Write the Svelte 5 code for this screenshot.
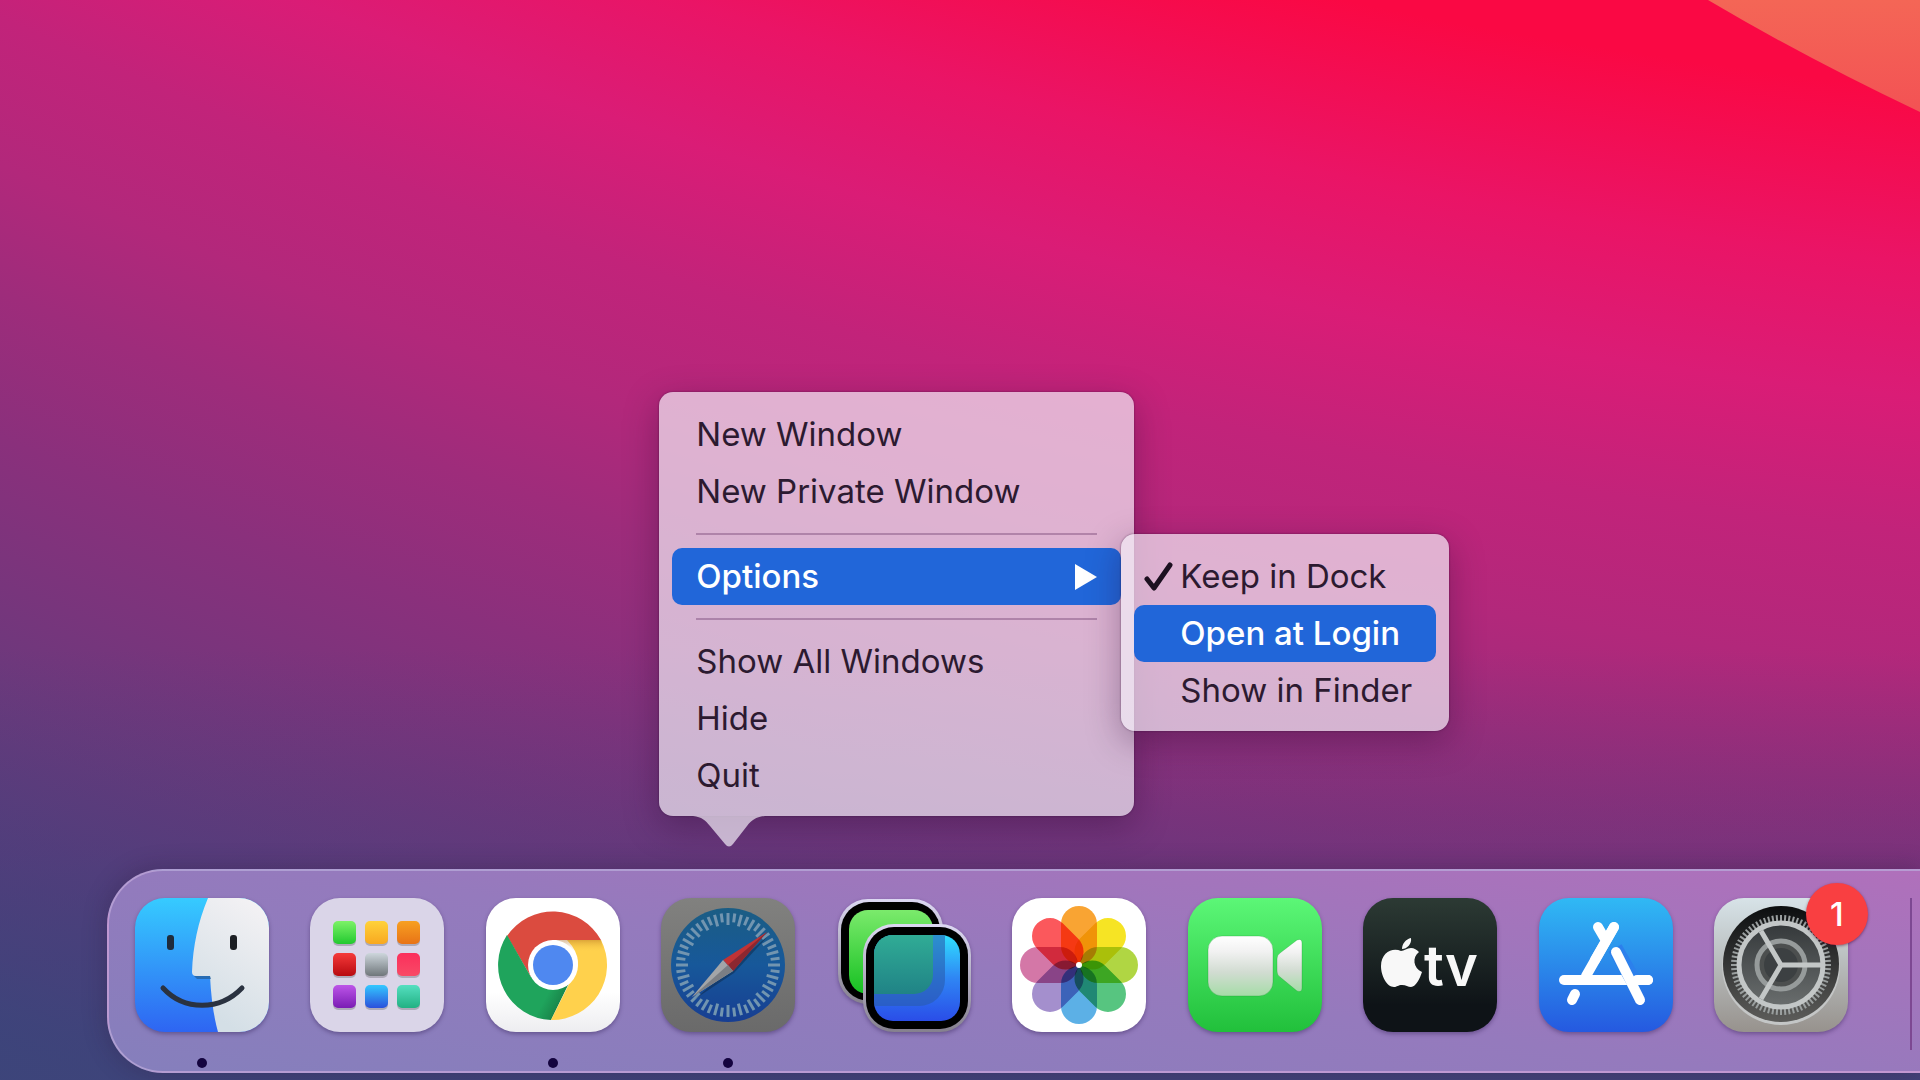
<script lang="ts">
  type Entry = { label?: string; active?: boolean; checked?: boolean; submenu?: Entry[] };

  const options: Entry[] = [
    { label: 'Keep in Dock', checked: true },
    { label: 'Open at Login', active: true },
    { label: 'Show in Finder' }
  ];

  const menu: Entry[] = [
    { label: 'New Window' },
    { label: 'New Private Window' },
    {},
    { label: 'Options', active: true, submenu: options },
    {},
    { label: 'Show All Windows' },
    { label: 'Hide' },
    { label: 'Quit' }
  ];

  const apps = [
    { id: 'finder', name: 'Finder', running: true },
    { id: 'launchpad', name: 'Launchpad' },
    { id: 'chrome', name: 'Google Chrome', running: true },
    { id: 'safari', name: 'Safari', running: true, menu },
    { id: 'windows', name: 'Window Switcher' },
    { id: 'photos', name: 'Photos' },
    { id: 'facetime', name: 'FaceTime' },
    { id: 'tv', name: 'TV' },
    { id: 'appstore', name: 'App Store' },
    { id: 'settings', name: 'System Preferences', badge: 1 }
  ];

  const pads = [
    ['#7df267', '#22c930'], ['#ffd23a', '#f8a820'], ['#f7a022', '#e87316'],
    ['#f53a3a', '#b80a10'], ['#cdd6dc', '#70777b'], ['#fb2f5c', '#f84a66'],
    ['#bd55e8', '#7a1cb4'], ['#33c8ff', '#2b50dc'], ['#55dfc0', '#22b183']
  ];

  const petals = ['#f99a1c', '#f5e10c', '#a8d22e', '#45bf72', '#4aa8e4', '#9a83c8', '#d0689e', '#fb464a'];

  const ticks = Array.from({ length: 48 }, (_, i) => i * 7.5);
  const teeth = Array.from({ length: 72 }, (_, i) => i * 5);
</script>

<svelte:head>
  <title>Desktop</title>
</svelte:head>

{#snippet icon(id: string)}
  <svg class="icon" viewBox="0 0 134 134" aria-hidden="true">
    {#if id === 'finder'}
      <defs>
        <linearGradient id="finder-blue" x2="0" y2="1">
          <stop stop-color="#36cbff" />
          <stop offset="1" stop-color="#2e65f2" />
        </linearGradient>
        <linearGradient id="finder-white" x1="1" x2="0.6" y2="1">
          <stop stop-color="#f6f3f5" />
          <stop offset="1" stop-color="#d4dfe6" />
        </linearGradient>
        <clipPath id="finder-clip"><rect width="134" height="134" rx="30" /></clipPath>
      </defs>
      <g clip-path="url(#finder-clip)">
        <rect width="134" height="134" fill="url(#finder-blue)" />
        <path d="M73 0C63 24 58 48 57 74q0 4 4 4h14c1 19 3 38 8 56h51V0z" fill="url(#finder-white)" />
        <path d="M59 78h16l1 3H62z" fill="#245d96" opacity=".7" />
      </g>
      <rect x="32" y="37" width="7" height="15" rx="3" fill="#1f2c3c" />
      <rect x="95" y="37" width="7" height="15" rx="3" fill="#1c1f24" />
      <path d="M28 90c21 23 57 23 79 0" fill="none" stroke="#2a3240" stroke-width="5" stroke-linecap="round" />
    {:else if id === 'launchpad'}
      <rect width="134" height="134" rx="30" fill="#dad5e8" />
      {#each pads as [from, to], i}
        <linearGradient id="pad-{i}" x2="0" y2="1">
          <stop stop-color={from} />
          <stop offset="1" stop-color={to} />
        </linearGradient>
        <rect x={23 + (i % 3) * 32} y={25 + Math.floor(i / 3) * 32} width="23" height="23" rx="5" fill="#0003" />
        <rect x={23 + (i % 3) * 32} y={23 + Math.floor(i / 3) * 32} width="23" height="23" rx="5" fill="url(#pad-{i})" />
      {/each}
    {:else if id === 'chrome'}
      <defs>
        <linearGradient id="chrome-tile" x2="0" y2="1">
          <stop offset=".7" stop-color="#fff" />
          <stop offset="1" stop-color="#ededf0" />
        </linearGradient>
        <linearGradient id="chrome-shade" x2="0" y2="1">
          <stop stop-color="#a8641c" stop-opacity=".4" />
          <stop offset="1" stop-color="#ffd24d" stop-opacity="0" />
        </linearGradient>
        <linearGradient id="chrome-green" x1="0.2" y1=".2" x2="1" y2=".7">
          <stop offset=".7" stop-color="#1fa45c" />
          <stop offset="1" stop-color="#177a44" />
        </linearGradient>
      </defs>
      <rect width="134" height="134" rx="30" fill="url(#chrome-tile)" />
      <path d="M21 38A55 55 0 0 1 115 42H67L45 79z" fill="#db4b3f" />
      <path d="M21 37A55 55 0 0 0 65 122L86 79 45 79z" fill="url(#chrome-green)" />
      <path d="M115 42A55 55 0 0 1 65 122L86 80Q100 62 81 42z" fill="#ffd14c" />
      <path d="M70 42h45l3 12H86z" fill="url(#chrome-shade)" />
      <circle cx="67" cy="67" r="25" fill="#fff" />
      <circle cx="67" cy="67" r="20" fill="#4f88f0" />
    {:else if id === 'safari'}
      <defs>
        <linearGradient id="safari-tile" x2="0" y2="1">
          <stop stop-color="#81817f" />
          <stop offset="1" stop-color="#6a6a6a" />
        </linearGradient>
        <linearGradient id="safari-dial" x2="0" y2="1">
          <stop stop-color="#1b5d84" />
          <stop offset=".5" stop-color="#17589a" />
          <stop offset="1" stop-color="#173e92" />
        </linearGradient>
      </defs>
      <rect width="134" height="134" rx="30" fill="url(#safari-tile)" />
      <circle cx="67" cy="67" r="57" fill="url(#safari-dial)" />
      {#each ticks as angle, i}
        <path d="M67 15v{i % 2 ? 9 : 12}" stroke="#7295b0" stroke-width="3" transform="rotate({angle} 67 67)" />
      {/each}
      <path d="M108 37L73 75 34 101z" fill="#0b2848" opacity=".5" />
      <path d="M106 34L62 62l10 11z" fill="#c03335" />
      <path d="M106 34L67 67l5 6z" fill="#8c2730" />
      <path d="M31 99L62 62l10 11z" fill="#a3a5a8" />
      <path d="M31 99L67 67l5 6z" fill="#7b7e84" />
    {:else if id === 'windows'}
      <defs>
        <linearGradient id="win-green" x2="0" y2="1">
          <stop stop-color="#7bea6c" />
          <stop offset="1" stop-color="#16c022" />
        </linearGradient>
        <linearGradient id="win-blue" x2="0" y2="1">
          <stop stop-color="#30e0ff" />
          <stop offset=".5" stop-color="#2f86f4" />
          <stop offset="1" stop-color="#2a4de8" />
        </linearGradient>
        <linearGradient id="win-teal" x2="0" y2="1">
          <stop stop-color="#37bd9c" />
          <stop offset="1" stop-color="#208386" />
        </linearGradient>
        <linearGradient id="win-rim" x2="0" y2="1">
          <stop stop-color="#dcd8f2" />
          <stop offset="1" stop-color="#85808e" />
        </linearGradient>
        <clipPath id="win-clip"><rect x="37" y="37" width="86" height="86" rx="19" /></clipPath>
      </defs>
      <rect x="1" y="1" width="105" height="105" rx="30" fill="url(#win-rim)" />
      <rect x="4" y="4" width="99" height="99" rx="28" />
      <rect x="12" y="12" width="84" height="84" rx="19" fill="url(#win-green)" />
      <rect x="26" y="26" width="108" height="108" rx="31" fill="url(#win-rim)" />
      <rect x="29" y="29" width="102" height="102" rx="28" />
      <g clip-path="url(#win-clip)">
        <rect x="37" y="37" width="86" height="86" fill="url(#win-blue)" />
        <rect x="0" y="0" width="108" height="108" rx="26" fill="#2a5cae" opacity=".6" />
        <rect x="0" y="12" width="96" height="84" rx="19" fill="url(#win-teal)" />
      </g>
    {:else if id === 'photos'}
      <rect width="134" height="134" rx="30" fill="#fff" />
      <g class="petals">
        {#each petals as color, i}
          <rect x="49" y="8" width="36" height="58" rx="18" fill={color} transform="rotate({i * 45} 67 67)" />
        {/each}
      </g>
      <circle cx="67" cy="67" r="3" fill="#fff" />
    {:else if id === 'facetime'}
      <defs>
        <linearGradient id="ft-tile" x2="0" y2="1">
          <stop stop-color="#5cf777" />
          <stop offset="1" stop-color="#21c03b" />
        </linearGradient>
        <linearGradient id="ft-cam" x2="0" y2="1">
          <stop stop-color="#fff" />
          <stop offset=".25" stop-color="#f2f2f2" />
          <stop offset=".6" stop-color="#d2dcd2" />
          <stop offset="1" stop-color="#a5dca7" />
        </linearGradient>
      </defs>
      <rect width="134" height="134" rx="30" fill="url(#ft-tile)" />
      <g stroke="#14942c" stroke-opacity=".3">
        <rect x="20" y="38" width="65" height="60" rx="14" fill="url(#ft-cam)" />
        <path d="M89 61q0-4 3-6l17-13q5-2 5 3v45q0 5-5 3L92 79q-3-2-3-6z" fill="url(#ft-cam)" />
      </g>
    {:else if id === 'tv'}
      <defs>
        <linearGradient id="tv-tile" x2="0" y2="1">
          <stop stop-color="#2c3a34" />
          <stop offset=".8" stop-color="#0e1317" />
        </linearGradient>
      </defs>
      <rect width="134" height="134" rx="30" fill="url(#tv-tile)" />
      <path d="M38 53c3 0 6-3 10-3 3 0 6 2 8 4-7 5-6 16 3 20-2 6-6 15-11 15-3 0-5-2-9-2s-5 2-8 2c-7 0-13-11-13-21 0-14 12-19 20-15zM39 51c0-5 4-10 9-11 1 6-4 11-9 11z" fill="#f8f8f8" />
      <text class="tv" x="61" y="88">tv</text>
    {:else if id === 'appstore'}
      <defs>
        <linearGradient id="as-tile" x2="0" y2="1">
          <stop stop-color="#30b9f4" />
          <stop offset="1" stop-color="#2559e0" />
        </linearGradient>
      </defs>
      <rect width="134" height="134" rx="30" fill="url(#as-tile)" />
      <g stroke="#fff" stroke-width="10" stroke-linecap="round" fill="none">
        <path d="M75 29L47 78M59 29l7 12M36 96l-3 6" />
        <path d="M25 82h84" />
      </g>
      <path d="M76 50l22 39" stroke="#2c80ec" stroke-width="15" />
      <path d="M75 29L56 62" stroke="#fff" stroke-width="10" stroke-linecap="round" />
      <path d="M77 54l24 48" stroke="#fff" stroke-width="10" stroke-linecap="round" />
      <path d="M98 82h11" stroke="#fff" stroke-width="10" stroke-linecap="round" />
    {:else if id === 'settings'}
      <defs>
        <linearGradient id="set-tile" x2="0" y2="1">
          <stop stop-color="#d7e3e8" />
          <stop offset="1" stop-color="#97928d" />
        </linearGradient>
        <linearGradient id="set-well" x2="0" y2="1">
          <stop stop-color="#0c0e0f" />
          <stop offset="1" stop-color="#5c5c5a" />
        </linearGradient>
        <linearGradient id="set-disc" x2="0" y2="1">
          <stop stop-color="#34383a" />
          <stop offset="1" stop-color="#6a6e6e" />
        </linearGradient>
      </defs>
      <rect width="134" height="134" rx="30" fill="url(#set-tile)" />
      <circle cx="67" cy="68" r="59" fill="#c4c6c6" />
      <circle cx="67" cy="66" r="58" fill="url(#set-well)" />
      {#each teeth as angle}
        <path d="M67 17v8" stroke="#9a9f9f" stroke-width="2" transform="rotate({angle} 67 67)" />
      {/each}
      <circle cx="67" cy="67" r="42" fill="url(#set-disc)" stroke="#c3c7c7" stroke-width="5" />
      <circle cx="67" cy="67" r="24" fill="#4c4f4f" stroke="#969b9b" stroke-width="5" />
      <circle cx="67" cy="67" r="17" fill="#3c4042" />
      <path d="M67 67h40M67 67L47 33M67 67L47 101" stroke="#c3c7c7" stroke-width="5" />
    {/if}
  </svg>
{/snippet}

{#snippet entries(items: Entry[])}
  {#each items as item}
    {#if item.label}
      <li role="none" class="entry">
        <button
          type="button"
          role={item.checked ? 'menuitemcheckbox' : 'menuitem'}
          aria-checked={item.checked}
          class:active={item.active}
        >
          {#if item.checked}
            <svg class="check" viewBox="0 0 30 30" aria-hidden="true">
              <path d="M3 17l7 9L26 3" />
            </svg>
          {/if}
          {item.label}
          {#if item.submenu}
            <svg class="arrow" viewBox="0 0 22 26" aria-hidden="true"><path d="M0 0l22 13L0 26z" /></svg>
          {/if}
        </button>
        {#if item.submenu}
          <ul class="menu submenu" role="menu" aria-label={item.label}>
            {@render entries(item.submenu)}
          </ul>
        {/if}
      </li>
    {:else}
      <li role="separator" class="separator"></li>
    {/if}
  {/each}
{/snippet}

<main class="desktop">
  <svg class="ridge" viewBox="0 0 212 112" aria-hidden="true">
    <defs>
      <linearGradient id="ridge-fill" x2="0" y2="1">
        <stop stop-color="#f46656" />
        <stop offset="1" stop-color="#f35254" />
      </linearGradient>
    </defs>
    <path d="M0 0Q98 58 212 112V0z" fill="url(#ridge-fill)" />
  </svg>

  <nav class="dock" aria-label="Dock">
    <ul class="apps">
      {#each apps as app}
        <li class="app">
          <button type="button" class="launcher" aria-label={app.name}>
            {@render icon(app.id)}
          </button>
          {#if app.badge}
            <span class="badge">{app.badge}</span>
          {/if}
          {#if app.running}
            <span class="dot"></span>
          {/if}
          {#if app.menu}
            <div class="popover">
              <ul class="menu" role="menu" aria-label={app.name}>
                {@render entries(app.menu)}
              </ul>
              <svg class="tail" viewBox="0 0 72 31" aria-hidden="true">
                <path d="M0 0C9 1 12 4 17 10L32 28q4 5 8 0L54 10C59 4 63 1 72 0z" />
              </svg>
            </div>
          {/if}
        </li>
      {/each}
    </ul>
    <span class="divider"></span>
  </nav>
</main>

<style>
  :global(body) {
    font-family: Inter, 'Liberation Sans', sans-serif;
  }

  ul {
    list-style: none;
    margin: 0;
    padding: 0;
  }

  button {
    padding: 0;
    border: 0;
    background: none;
    font: inherit;
    color: inherit;
  }

  .desktop {
    position: relative;
    display: flex;
    flex-direction: column;
    justify-content: flex-end;
    box-sizing: border-box;
    min-height: 100vh;
    padding: 0 0 7px 107px;
    overflow: hidden;
    background:
      linear-gradient(to bottom, rgb(66 60 122 / 0) 60%, rgb(66 60 122 / 0.3) 79%, rgb(62 68 122 / 0.9) 100%),
      radial-gradient(
        circle at 128vw -277vw,
        #fa0844 283vw,
        #ea1466 292vw,
        #da1c76 299vw,
        #c2237a 306vw,
        #b2287b 313vw,
        #9e2c7b 319vw,
        #8a307c 326vw,
        #78357c 333vw,
        #683a7c 339vw,
        #583e7c 345vw,
        #4c407c 351vw,
        #2e4a7c 358vw
      );
  }

  .ridge {
    position: absolute;
    top: 0;
    right: 0;
    width: 212px;
  }

  .dock {
    display: flex;
    align-items: flex-start;
    gap: 62px;
    padding: 27px 8px 21px 26px;
    border: 2px solid rgb(214 190 232 / 0.5);
    border-right: 0;
    border-radius: 56px 0 0 56px;
    background: linear-gradient(8deg, #857fbc 0%, #957abd 50%, #b070bb 100%);
    box-shadow: 0 0 24px rgb(40 20 50 / 0.3);
  }

  .apps {
    display: flex;
    flex: 1;
    justify-content: space-between;
  }

  .app {
    position: relative;
    width: 134px;
  }

  .launcher,
  .icon {
    display: block;
    width: 134px;
    height: 134px;
  }

  .icon {
    overflow: visible;
    filter: drop-shadow(0 2px 2px rgb(30 10 60 / 0.35));
  }

  .petals {
    isolation: isolate;
  }

  .petals rect {
    mix-blend-mode: multiply;
    opacity: 0.9;
  }

  .tv {
    font-size: 56px;
    font-weight: 600;
    fill: #f8f8f8;
  }

  .dot {
    position: absolute;
    top: 160px;
    left: 62px;
    width: 10px;
    height: 10px;
    border-radius: 50%;
    background: #14043f;
  }

  .badge {
    position: absolute;
    top: -15px;
    right: -20px;
    width: 62px;
    height: 62px;
    border-radius: 50%;
    background: #f93f41;
    box-shadow: 0 1px 3px rgb(60 0 40 / 0.5);
    color: #fff;
    font-size: 33px;
    font-weight: 500;
    line-height: 62px;
    text-align: center;
  }

  .divider {
    width: 2px;
    height: 152px;
    background: #7d4892;
  }

  .popover {
    position: absolute;
    bottom: calc(100% + 82px);
    left: -2px;
  }

  .menu {
    box-sizing: border-box;
    width: 475px;
    padding: 14px 13px 12px;
    border-radius: 14px;
    background: rgb(242 236 246 / 0.7);
    box-shadow:
      0 0 2px rgb(40 10 50 / 0.6),
      0 10px 34px rgb(40 10 50 / 0.35);
    color: #2c1a30;
    font-size: 33px;
    line-height: 57px;
  }

  .submenu {
    position: absolute;
    top: -14px;
    left: 100%;
    width: 328px;
  }

  .entry {
    position: relative;
  }

  .entry button {
    position: relative;
    display: flex;
    align-items: center;
    justify-content: space-between;
    width: 100%;
    height: 57px;
    padding: 0 24px;
    border-radius: 10px;
    text-align: left;
    white-space: nowrap;
  }

  .submenu .entry button {
    padding: 0 0 0 46px;
  }

  .entry .active {
    background: #2166d9;
    color: #fff;
    font-weight: 500;
  }

  .separator {
    height: 2px;
    margin: 13px 24px;
    background: rgb(110 60 110 / 0.4);
  }

  .arrow {
    width: 22px;
    height: 26px;
    fill: #fff;
  }

  .check {
    position: absolute;
    left: 10px;
    width: 30px;
    height: 30px;
    fill: none;
    stroke: #1c1020;
    stroke-width: 5;
    stroke-linecap: round;
    stroke-linejoin: round;
  }

  .tail {
    position: absolute;
    top: 100%;
    left: 34px;
    width: 72px;
    height: 31px;
    fill: rgb(242 236 246 / 0.7);
  }
</style>
